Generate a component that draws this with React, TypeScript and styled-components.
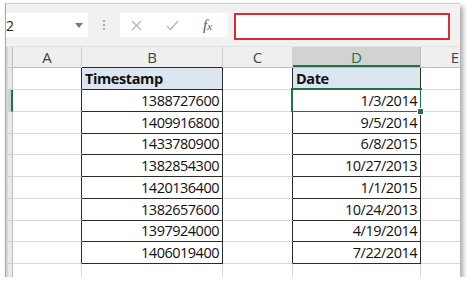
import React from 'react'
import styled, { createGlobalStyle } from 'styled-components'

const GlobalStyle = createGlobalStyle`
  html, body { margin: 0; padding: 0; background: #fff; }
  body { font-family: "Open Sans", "Liberation Sans", sans-serif; }
`

const GRID = '#d9d9d9'
const DARK = '#2b2b2b'
const GREEN = '#217346'

const Window = styled.div`
  margin: 3px 0 0 5px;
  width: 455px;
  height: 274px;
  overflow: hidden;
  border-left: 1px solid #a9a9a9;
  border-top: 1px solid #d0d0d0;
  box-sizing: border-box;
  background: #fff;
  box-shadow: 3px 3px 5px rgba(0, 0, 0, 0.35);
`

const Toolbar = styled.div`
  height: 43px;
  box-sizing: border-box;
  background: #f1f1f1;
  border-bottom: 1px solid #e2e2e2;
  display: flex;
  align-items: flex-start;
  padding-top: 9px;
`

const NameBox = styled.div`
  width: 82px;
  height: 24px;
  box-sizing: border-box;
  background: #fff;
  display: flex;
  align-items: center;
  justify-content: space-between;
  padding: 0 5px 0 0;
  font-size: 14px;
  color: #222;
`

const Grip = styled.div`
  width: 32px;
  height: 24px;
  display: flex;
  flex-direction: column;
  align-items: center;
  justify-content: center;
  gap: 2px;
  span {
    width: 2px;
    height: 2px;
    background: #a8a8a8;
  }
`

const FxBox = styled.div`
  width: 108px;
  height: 24px;
  background: #fff;
  display: flex;
  align-items: center;
  gap: 24px;
  padding: 0 0 0 11px;
  box-sizing: border-box;
`

const FxLabel = styled.span`
  font-family: "Liberation Serif", serif;
  font-style: italic;
  font-size: 15px;
  color: #555;
  sub {
    font-size: 11px;
    vertical-align: 0;
  }
`

const FormulaBar = styled.div`
  margin-left: 6px;
  width: 216px;
  height: 27px;
  box-sizing: border-box;
  border: 2px solid #dd2a2e;
  background: #fff;
`

const Sheet = styled.div`
  display: grid;
  grid-template-columns: 7px 69px 141px 70px 128px 69px;
  grid-template-rows: 21px 22px repeat(8, 21.75px) 22px;
`

const ColHead = styled.div<{ $active?: boolean; $bottom?: string }>`
  box-sizing: border-box;
  background: ${p => (p.$active ? '#d2d2d2' : '#efefef')};
  border-right: 1px solid ${p => (p.$active ? '#c0c0c0' : '#cfcfcf')};
  border-bottom: 1px solid ${p => p.$bottom || '#bdbdbd'};
  box-shadow: ${p => (p.$active ? `inset 0 -2px 0 ${GREEN}` : 'none')};
  color: ${p => (p.$active ? GREEN : '#444')};
  font-size: 15px;
  display: flex;
  align-items: center;
  justify-content: center;
  line-height: 1;
`

const RowHead = styled.div<{ $active?: boolean }>`
  box-sizing: border-box;
  background: ${p => (p.$active ? '#d2d2d2' : '#e9e9e9')};
  border-left: 2px solid #d6d6d6;
  border-right: ${p => (p.$active ? `2px solid ${GREEN}` : '1px solid #bdbdbd')};
  border-bottom: 1px solid #d0d0d0;
`

const Cell = styled.div<{
  $right?: string
  $bottom?: string
  $bg?: string
  $align?: 'left' | 'right'
  $bold?: boolean
  $selected?: boolean
}>`
  position: relative;
  box-sizing: border-box;
  background: ${p => p.$bg || '#fff'};
  border-right: 1px solid ${p => p.$right || GRID};
  border-bottom: 1px solid ${p => p.$bottom || GRID};
  display: flex;
  align-items: flex-end;
  justify-content: ${p => (p.$align === 'right' ? 'flex-end' : 'flex-start')};
  padding: 0 3px 1px 3px;
  font-size: 14.5px;
  letter-spacing: ${p => (p.$bold ? '-0.4px' : '-0.5px')};
  font-weight: ${p => (p.$bold ? 700 : 400)};
  color: #111;
  line-height: 18px;
  white-space: nowrap;
  ${p =>
    p.$selected &&
    `
    &::after {
      content: '';
      position: absolute;
      left: -2px;
      top: -2px;
      right: -2px;
      bottom: -2px;
      border: 2px solid ${GREEN};
      pointer-events: none;
    }
    &::before {
      content: '';
      position: absolute;
      right: -4px;
      bottom: -4px;
      width: 5px;
      height: 5px;
      background: ${GREEN};
      border: 1px solid #fff;
      z-index: 2;
    }
  `}
`

const timestamps = [
  '1388727600',
  '1409916800',
  '1433780900',
  '1382854300',
  '1420136400',
  '1382657600',
  '1397924000',
  '1406019400',
]

const dates = [
  '1/3/2014',
  '9/5/2014',
  '6/8/2015',
  '10/27/2013',
  '1/1/2015',
  '10/24/2013',
  '4/19/2014',
  '7/22/2014',
]

const HEADER_BG = '#dce6f1'

const App = () => {
  const rows: React.ReactNode[] = []

  // row 1: headers
  rows.push(
    <React.Fragment key="r1">
      <RowHead />
      <Cell $right={DARK} />
      <Cell $right={DARK} $bottom={DARK} $bg={HEADER_BG} $bold>
        Timestamp
      </Cell>
      <Cell $right={DARK} />
      <Cell $right={DARK} $bottom={DARK} $bg={HEADER_BG} $bold>
        Date
      </Cell>
      <Cell />
    </React.Fragment>
  )

  timestamps.forEach((ts, i) => {
    rows.push(
      <React.Fragment key={ts}>
        <RowHead $active={i === 0} />
        <Cell $right={DARK} />
        <Cell $right={DARK} $bottom={DARK} $align="right">
          {ts}
        </Cell>
        <Cell $right={DARK} />
        <Cell $right={DARK} $bottom={DARK} $align="right" $selected={i === 0}>
          {dates[i]}
        </Cell>
        <Cell />
      </React.Fragment>
    )
  })

  rows.push(
    <React.Fragment key="r10">
      <RowHead />
      <Cell />
      <Cell />
      <Cell />
      <Cell />
      <Cell />
    </React.Fragment>
  )

  return (
    <>
      <GlobalStyle />
      <Window>
        <Toolbar>
          <NameBox>
            <span>2</span>
            <svg width="8" height="5" viewBox="0 0 8 5">
              <path d="M0 0 H8 L4 5 Z" fill="#7a7a7a" />
            </svg>
          </NameBox>
          <Grip>
            <span />
            <span />
            <span />
          </Grip>
          <FxBox>
            <svg width="11" height="11" viewBox="0 0 11 11">
              <path d="M1 1 L10 10 M10 1 L1 10" stroke="#b4b4b4" strokeWidth="1.3" />
            </svg>
            <svg width="13" height="11" viewBox="0 0 13 11">
              <path d="M1 6 L4.5 9.5 L12 1" stroke="#b4b4b4" strokeWidth="1.3" fill="none" />
            </svg>
            <FxLabel>
              f<sub>x</sub>
            </FxLabel>
          </FxBox>
          <FormulaBar />
        </Toolbar>
        <Sheet>
          <RowHead />
          <ColHead>A</ColHead>
          <ColHead $bottom={DARK}>B</ColHead>
          <ColHead>C</ColHead>
          <ColHead $active>D</ColHead>
          <ColHead>E</ColHead>
          {rows}
        </Sheet>
      </Window>
    </>
  )
}

export default App
